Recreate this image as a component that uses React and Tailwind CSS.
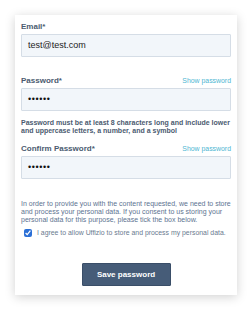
import React from "react";

const Field = ({ label, value, showToggle, type = "text" }) => (
  <div>
    <div className="flex items-center justify-between h-[10px]">
      <span className="text-[8px] font-bold text-[#4b5b70] leading-none">{label}</span>
      {showToggle && (
        <span className="text-[6.9px] text-[#4db6d2] leading-none">Show password</span>
      )}
    </div>
    <div className="mt-[2px] h-[23px] border border-[#d5dde6] bg-[#f2f6fa] rounded-[1px] flex items-center px-[6px]">
      {type === "password" ? (
        <span className="text-[9px] text-[#111] leading-none tracking-[0.6px]">{value}</span>
      ) : (
        <span className="text-[9px] text-[#222] leading-none">{value}</span>
      )}
    </div>
  </div>
);

export default function App() {
  return (
    <div
      className="w-[252px] h-[310px] bg-white pt-[15px] px-[15px]"
      style={{ fontFamily: '"Liberation Sans", Arial, sans-serif' }}
    >
      <div className="w-[222px] h-[280px] bg-white shadow-[0_2px_10px_rgba(0,0,0,0.18)] px-[6px] pt-[7px]">
        <Field label="Email*" value="test@test.com" />

        <div className="mt-[19px]">
          <Field label="Password*" value="••••••" type="password" showToggle />
        </div>

        <p className="mt-[8px] text-[7px] font-bold leading-[8px] text-[#4b5b70]">
          Password must be at least 8 characters long and include lower and uppercase letters, a number, and a symbol
        </p>

        <div className="mt-[9px]">
          <Field label="Confirm Password*" value="••••••" type="password" showToggle />
        </div>

        <p className="mt-[21px] text-[7px] leading-[8px] text-[#5d7391]">
          In order to provide you with the content requested, we need to store and process your personal data. If you consent to us storing your personal data for this purpose, please tick the box below.
        </p>

        <label className="mt-[5px] flex items-center gap-[5px] pl-[3px]">
          <input type="checkbox" defaultChecked className="w-[8px] h-[8px] m-0 accent-[#2b6fd6]" />
          <span className="text-[6.9px] text-[#6a7a8f] leading-none whitespace-nowrap">
            I agree to allow Uffizio to store and process my personal data.
          </span>
        </label>

        <div className="mt-[26px] flex justify-center">
          <button className="w-[89px] h-[23px] bg-[#465c78] border border-[#3a4e68] text-white text-[8px] font-bold rounded-[1px]">
            Save password
          </button>
        </div>
      </div>
    </div>
  );
}
